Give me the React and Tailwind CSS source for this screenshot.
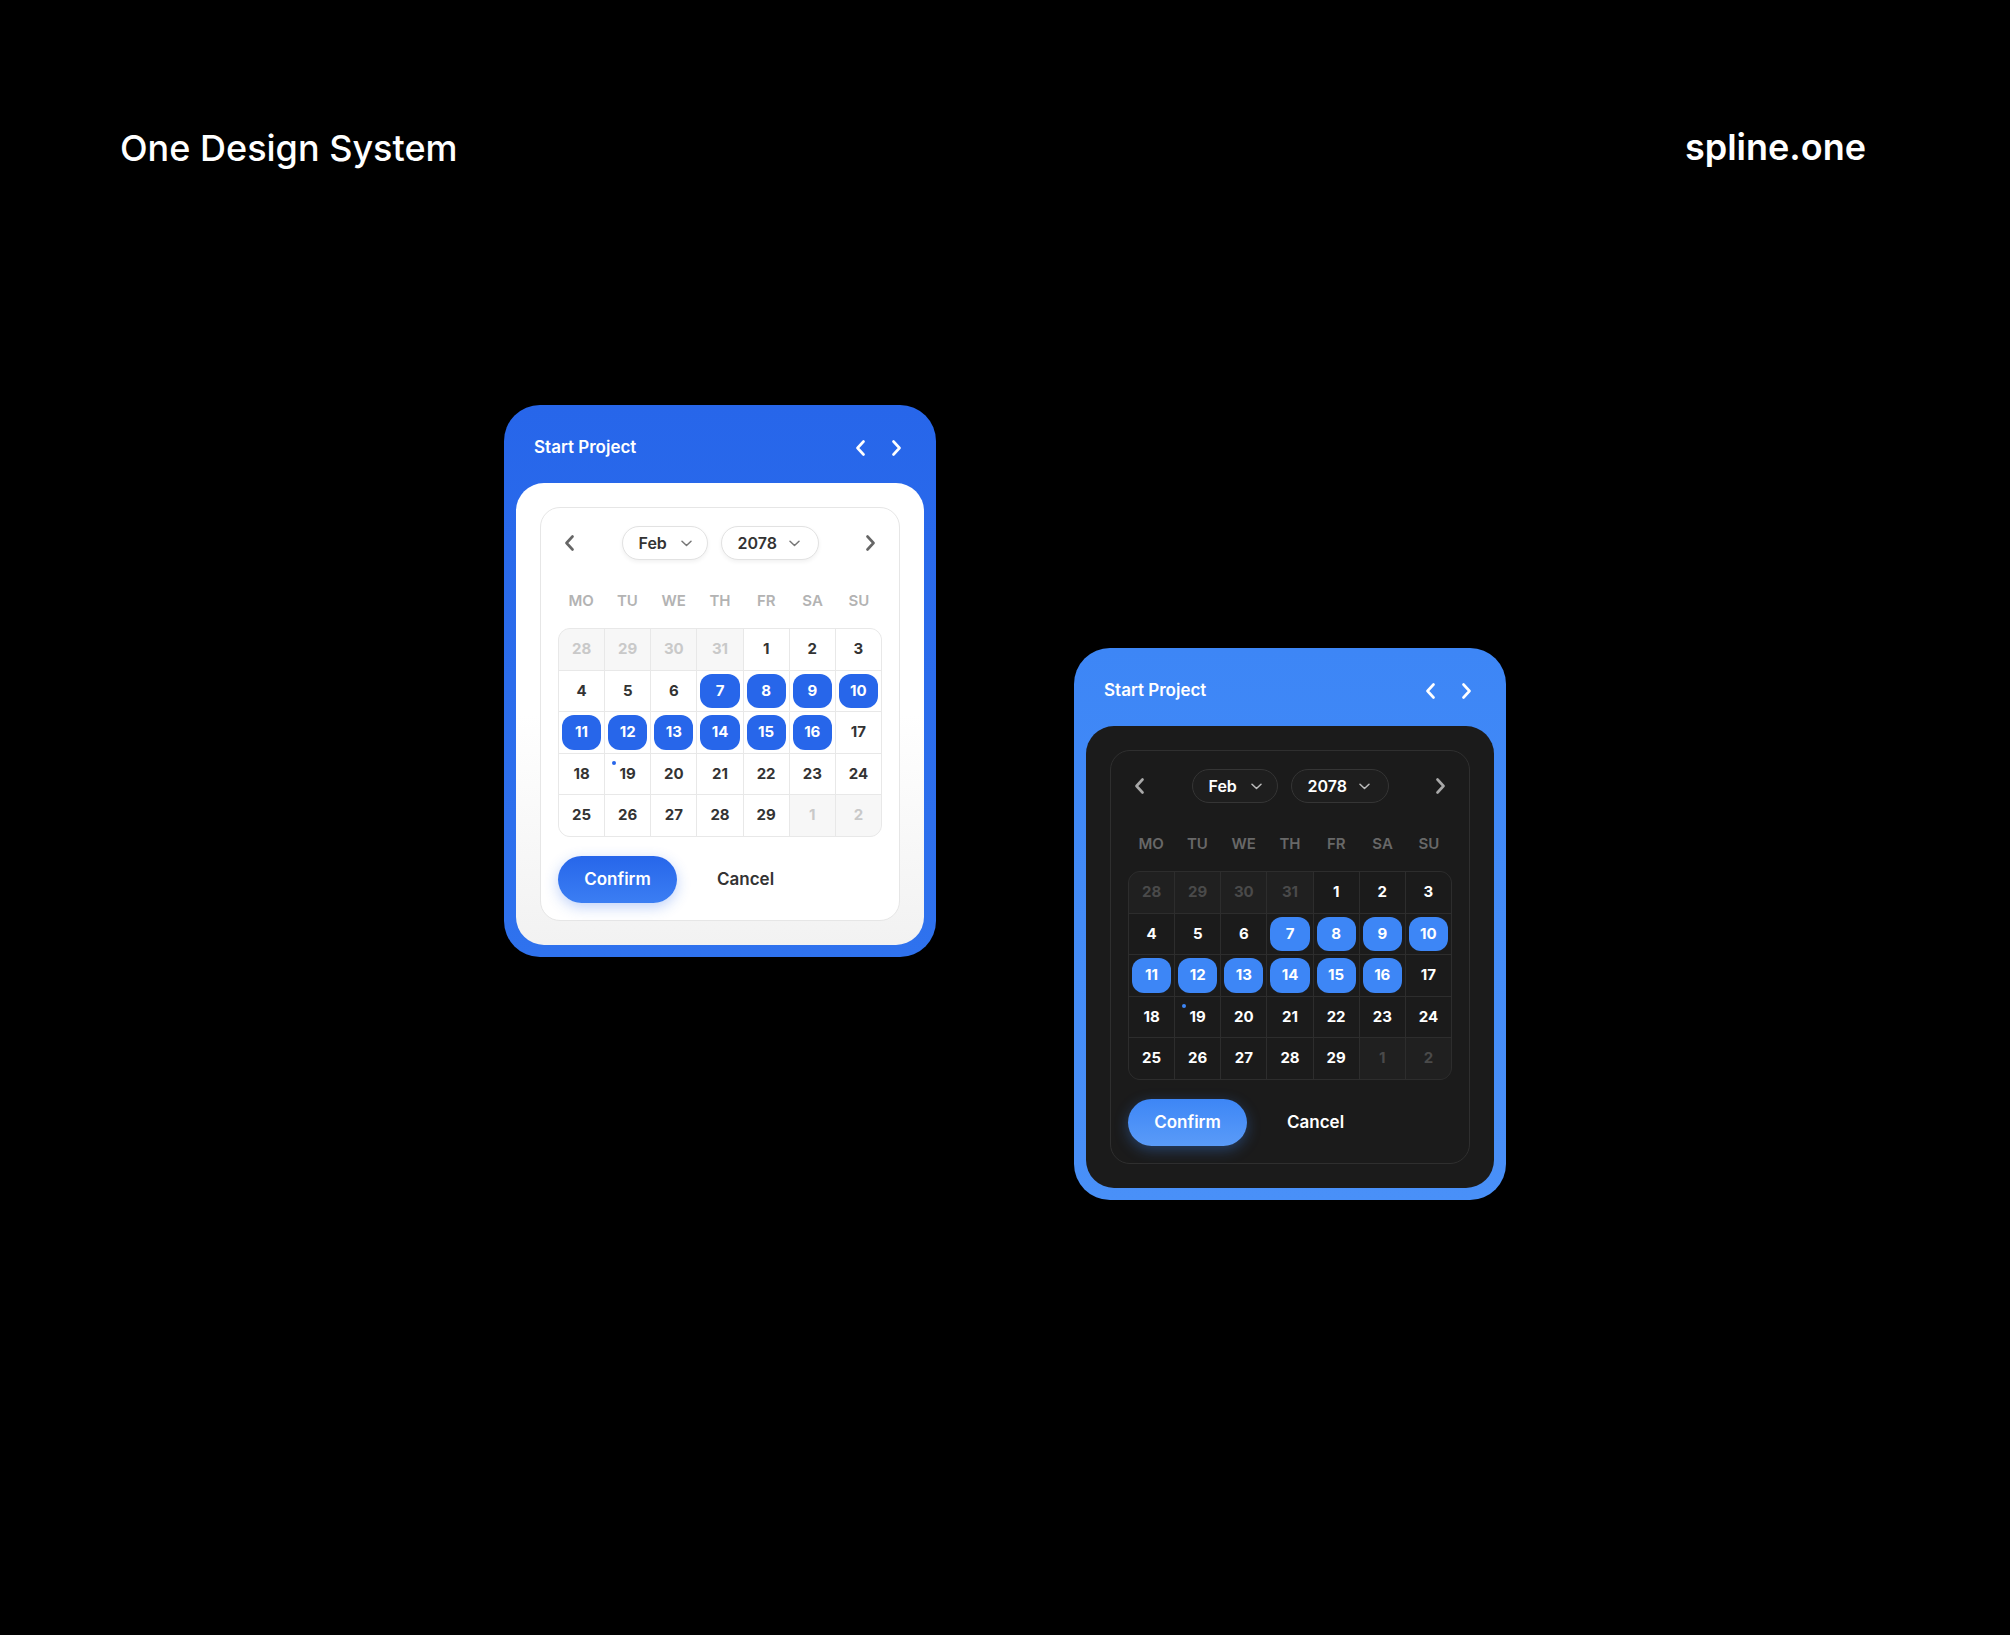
import React from 'react';

const weekDays = ['MO', 'TU', 'WE', 'TH', 'FR', 'SA', 'SU'];

const days = [
  { n: 28, out: true }, { n: 29, out: true }, { n: 30, out: true }, { n: 31, out: true },
  { n: 1 }, { n: 2 }, { n: 3 },
  { n: 4 }, { n: 5 }, { n: 6 }, { n: 7, sel: true }, { n: 8, sel: true }, { n: 9, sel: true }, { n: 10, sel: true },
  { n: 11, sel: true }, { n: 12, sel: true }, { n: 13, sel: true }, { n: 14, sel: true }, { n: 15, sel: true }, { n: 16, sel: true }, { n: 17 },
  { n: 18 }, { n: 19, dot: true }, { n: 20 }, { n: 21 }, { n: 22 }, { n: 23 }, { n: 24 },
  { n: 25 }, { n: 26 }, { n: 27 }, { n: 28 }, { n: 29 }, { n: 1, out: true }, { n: 2, out: true },
];

const ChevronLeft = ({ className }) => (
  <svg width="11" height="16" viewBox="0 0 11 16" fill="none" className={className}>
    <path d="M8.5 1.5L2.5 8L8.5 14.5" stroke="currentColor" strokeWidth="2.6" strokeLinecap="round" strokeLinejoin="round" />
  </svg>
);

const ChevronRight = ({ className }) => (
  <svg width="11" height="16" viewBox="0 0 11 16" fill="none" className={className}>
    <path d="M2.5 1.5L8.5 8L2.5 14.5" stroke="currentColor" strokeWidth="2.6" strokeLinecap="round" strokeLinejoin="round" />
  </svg>
);

const ChevronDown = ({ className }) => (
  <svg width="11" height="7" viewBox="0 0 11 7" fill="none" className={className}>
    <path d="M1 1.2L5.5 5.5L10 1.2" stroke="currentColor" strokeWidth="1.5" strokeLinecap="round" strokeLinejoin="round" />
  </svg>
);

const Calendar = ({ dark }) => {
  const cardBg = dark
    ? 'bg-gradient-to-b from-[#3d86f6] to-[#4990f8]'
    : 'bg-gradient-to-b from-[#2766ea] to-[#2f72ee]';
  const panelBg = dark ? 'bg-[#1b1b1b]' : 'bg-gradient-to-b from-white via-white to-[#f2f2f2]';
  const boxBorder = dark ? 'border-[#2f2f2f]' : 'border-[#e6e6e6] bg-white';
  const navChevron = dark ? 'text-[#a8a8a8]' : 'text-[#666666]';
  const pill = dark
    ? 'bg-[#1e1e1e] border-[#353535] text-white'
    : 'bg-white border-[#e2e2e2] text-[#333333] shadow-[0_2px_4px_rgba(0,0,0,0.06)]';
  const pillChevron = dark ? 'text-[#bbbbbb]' : 'text-[#777777]';
  const headColor = dark ? 'text-[#686868]' : 'text-[#b3b3b3]';
  const gridLine = dark ? 'bg-[#2d2d2d] border-[#2d2d2d]' : 'bg-[#e8e8e8] border-[#e8e8e8]';
  const selBg = dark ? 'bg-[#3d86f6]' : 'bg-[#2766ea]';
  const confirm = dark
    ? 'bg-gradient-to-b from-[#3d86f6] to-[#5a9bf8] shadow-[0_4px_14px_rgba(61,134,246,0.35)]'
    : 'bg-gradient-to-b from-[#2766ea] to-[#3b7ef3] shadow-[0_4px_14px_rgba(39,102,234,0.3)]';

  return (
    <div className={`w-[432px] h-[552px] rounded-[36px] ${cardBg} px-[12px] pb-[12px] flex flex-col shrink-0`}>
      {/* Header */}
      <div className="h-[78px] flex items-center justify-between pl-[18px] pr-[22px] pt-[8px]">
        <span className="text-[17px] font-semibold text-white">Start Project</span>
        <div className="flex items-center gap-[25px] text-white">
          <ChevronLeft />
          <ChevronRight />
        </div>
      </div>

      {/* Panel */}
      <div className={`flex-1 rounded-[28px] ${panelBg} p-[24px] flex`}>
        <div className={`flex-1 rounded-[20px] border-[1.5px] ${boxBorder} px-[17px] flex flex-col`}>
          {/* Month nav */}
          <div className="flex items-center justify-between mt-[18px] h-[34px] px-[6px]">
            <ChevronLeft className={navChevron} />
            <div className="flex items-center gap-[13px]">
              <div className={`h-[34px] w-[86px] rounded-full border-[1.5px] ${pill} flex items-center pl-[16px] gap-[14px]`}>
                <span className="text-[16px] font-semibold">Feb</span>
                <ChevronDown className={pillChevron} />
              </div>
              <div className={`h-[34px] w-[98px] rounded-full border-[1.5px] ${pill} flex items-center pl-[16px] gap-[12px]`}>
                <span className="text-[16px] font-semibold">2078</span>
                <ChevronDown className={pillChevron} />
              </div>
            </div>
            <ChevronRight className={navChevron} />
          </div>

          {/* Week days */}
          <div className="grid grid-cols-7 mt-[30px] h-[20px] items-center">
            {weekDays.map((d) => (
              <span key={d} className={`text-center text-[15px] font-semibold ${headColor}`}>{d}</span>
            ))}
          </div>

          {/* Days */}
          <div className={`grid grid-cols-7 gap-[1px] border mt-[18px] rounded-[12px] overflow-hidden ${gridLine}`}>
            {days.map((d, i) => {
              let cellBg = dark ? 'bg-[#1b1b1b]' : 'bg-white';
              let text = dark ? 'text-white' : 'text-[#333333]';
              if (d.out) {
                cellBg = dark ? 'bg-[#202020]' : 'bg-[#f7f7f7]';
                text = dark ? 'text-[#4a4a4a]' : 'text-[#c9c9c9]';
              }
              return (
                <div key={i} className={`relative h-[40.6px] ${cellBg} flex p-[3px]`}>
                  {d.sel ? (
                    <div className={`flex-1 rounded-[12px] ${selBg} flex items-center justify-center text-[15px] font-bold text-white`}>
                      {d.n}
                    </div>
                  ) : (
                    <div className={`flex-1 flex items-center justify-center text-[15px] font-bold ${text}`}>
                      {d.n}
                    </div>
                  )}
                  {d.dot && (
                    <span className={`absolute top-[7px] left-[7px] w-[4px] h-[4px] rounded-full ${selBg}`}></span>
                  )}
                </div>
              );
            })}
          </div>

          {/* Actions */}
          <div className="flex items-center mt-[19px] gap-[40px]">
            <button className={`h-[47px] w-[119px] rounded-full ${confirm} text-white text-[17px] font-semibold`}>
              Confirm
            </button>
            <button className={`text-[17px] font-semibold ${dark ? 'text-white' : 'text-[#333333]'}`}>
              Cancel
            </button>
          </div>
        </div>
      </div>
    </div>
  );
};

export default function App() {
  return (
    <div className="w-[2010px] h-[1635px] bg-black font-['Inter','Noto_Sans',sans-serif] overflow-hidden">
      <div className="flex items-start justify-between pt-[122px] pl-[120px] pr-[144px]">
        <h1 className="text-[36px] leading-[44px] font-medium text-white mt-[4px]">One Design System</h1>
        <span className="text-[36px] leading-[44px] font-semibold text-white mt-[3px]">spline.one</span>
      </div>

      <div className="flex items-start mt-[235px] pl-[504px]">
        <Calendar />
        <div className="ml-[138px] mt-[243px]">
          <Calendar dark />
        </div>
      </div>
    </div>
  );
}
